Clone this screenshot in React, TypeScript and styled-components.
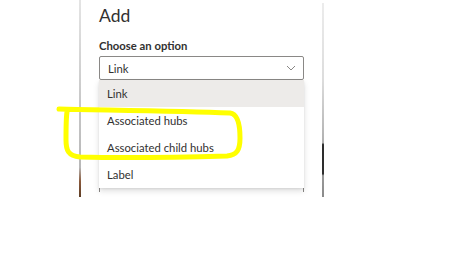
import React from "react";
import styled, { createGlobalStyle } from "styled-components";

const GlobalStyle = createGlobalStyle`
  html, body {
    margin: 0;
    padding: 0;
    background: #ffffff;
  }
  body {
    font-family: Lato, "Noto Sans", sans-serif;
    color: #323130;
  }
`;

const Page = styled.div`
  position: relative;
  width: 474px;
  height: 264px;
  overflow: hidden;
  background: #ffffff;
`;

const Frame = styled.div`
  display: flex;
  margin-left: 79px;
  width: 245px;
  height: 197px;
`;

const Edge = styled.div<{ $side: "left" | "right" }>`
  width: 2px;
  flex: none;
  margin-top: ${(p) => (p.$side === "right" ? "3px" : "0")};
  background: ${(p) =>
    p.$side === "left"
      ? "linear-gradient(to bottom, #e4e4e4 0%, #c9c9c9 50%, #b8b8b8 85%, #8a5a3c 92%, #5e3d25 100%)"
      : "linear-gradient(to bottom, #ececec 0%, #dcdcdc 40%, #b0b0b0 72%, #2e2e2e 73%, #2e2e2e 88%, #9a9a9a 89%, #8a8a8a 100%)"};
`;

const Panel = styled.div`
  flex: 1;
  padding: 4px 0 0 18px;
  display: flex;
  flex-direction: column;
`;

const Title = styled.h1`
  margin: 0;
  font-size: 17.5px;
  font-weight: 400;
  line-height: 24px;
  color: #323130;
`;

const FieldLabel = styled.div`
  margin-top: 10px;
  font-size: 11.3px;
  font-weight: 700;
  line-height: 16px;
  color: #323130;
`;

const SelectWrap = styled.div`
  position: relative;
  margin-top: 2px;
  width: 205px;
`;

const SelectBox = styled.div`
  box-sizing: border-box;
  height: 24px;
  border: 1px solid #8a8886;
  border-radius: 2px;
  display: flex;
  align-items: center;
  justify-content: space-between;
  padding: 0 7px 0 8px;
  font-size: 11.3px;
  color: #323130;
`;

const Menu = styled.div`
  position: absolute;
  top: 24px;
  left: 0;
  right: 0;
  background: #ffffff;
  box-shadow: 0 3px 6px rgba(0, 0, 0, 0.13), 0 1px 2px rgba(0, 0, 0, 0.08);
  z-index: 2;
`;

const Option = styled.div<{ $selected?: boolean }>`
  height: 27px;
  display: flex;
  align-items: center;
  padding-left: 8px;
  font-size: 11.3px;
  color: #323130;
  background: ${(p) => (p.$selected ? "#edebe9" : "#ffffff")};
`;

const NextField = styled.div`
  box-sizing: border-box;
  margin-top: 88px;
  width: 205px;
  height: 24px;
  border: 1px solid #8a8886;
  border-bottom: none;
  border-radius: 2px 2px 0 0;
`;

const Scribble = styled.svg`
  position: absolute;
  left: 0;
  top: 0;
  pointer-events: none;
  z-index: 3;
`;

const Chevron = () => (
  <svg width="10" height="6" viewBox="0 0 10 6">
    <path d="M1 1 L5 5 L9 1" fill="none" stroke="#8a8886" strokeWidth="1" />
  </svg>
);

export default function App() {
  return (
    <Page>
      <GlobalStyle />
      <Frame>
        <Edge $side="left" />
        <Panel>
          <Title>Add</Title>
          <FieldLabel>Choose an option</FieldLabel>
          <SelectWrap>
            <SelectBox>
              <span>Link</span>
              <Chevron />
            </SelectBox>
            <Menu>
              <Option $selected>Link</Option>
              <Option>Associated hubs</Option>
              <Option>Associated child hubs</Option>
              <Option>Label</Option>
            </Menu>
          </SelectWrap>
          <NextField />
        </Panel>
        <Edge $side="right" />
      </Frame>
      <Scribble width="474" height="264" viewBox="0 0 474 264">
        <path
          d="M59 109 C100 110 180 111 230 113 C238 114 240 125 240 138 C240 150 237 155 227 156 C190 157 120 158 80 157 C68 156 66 150 66 140 C66 128 66 118 67 112"
          fill="none"
          stroke="#ffff00"
          strokeWidth="5"
          strokeLinecap="round"
          strokeLinejoin="round"
        />
      </Scribble>
    </Page>
  );
}
